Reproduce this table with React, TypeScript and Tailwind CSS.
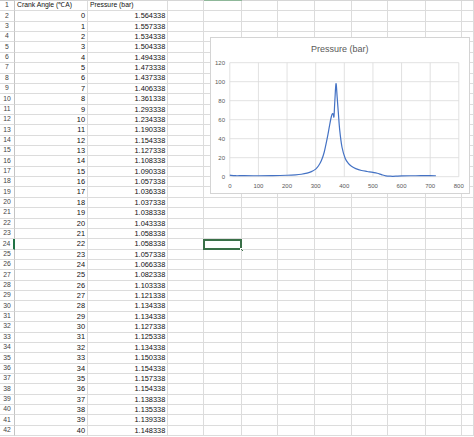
import React from "react";

const data: [number, string][] = [
  [0, "1.564338"], [1, "1.557338"], [2, "1.534338"], [3, "1.504338"], [4, "1.494338"],
  [5, "1.473338"], [6, "1.437338"], [7, "1.406338"], [8, "1.361338"], [9, "1.293338"],
  [10, "1.234338"], [11, "1.190338"], [12, "1.154338"], [13, "1.127338"], [14, "1.108338"],
  [15, "1.090338"], [16, "1.057338"], [17, "1.036338"], [18, "1.037338"], [19, "1.038338"],
  [20, "1.043338"], [21, "1.058338"], [22, "1.058338"], [23, "1.057338"], [24, "1.066338"],
  [25, "1.082338"], [26, "1.103338"], [27, "1.121338"], [28, "1.134338"], [29, "1.134338"],
  [30, "1.127338"], [31, "1.125338"], [32, "1.134338"], [33, "1.150338"], [34, "1.154338"],
  [35, "1.157338"], [36, "1.154338"], [37, "1.138338"], [38, "1.135338"], [39, "1.139338"],
  [40, "1.148338"],
];

const restCols = ["w-[36px]", "w-[37.4px]", "w-[36.3px]", "w-[37.3px]", "w-[36.7px]", "w-[36.3px]", "w-[37.4px]", "w-[36px]", "w-[12.3px]"];

const curvePts: [number, number][] = [
  [0, 1.56], [20, 1.04], [50, 1.1], [100, 1.0], [150, 1.1], [200, 1.5], [230, 2], [250, 2.6],
  [270, 3.8], [285, 5.3], [300, 8], [310, 11.5], [320, 17], [330, 26], [340, 40], [348, 53],
  [353, 61], [357, 65.5], [360, 66.5], [362, 65], [364, 63.5], [367, 80], [371, 98], [375, 84],
  [379, 68], [384, 49], [392, 31], [403, 19.5], [414, 14], [425, 11], [440, 8.5], [460, 6.5],
  [480, 5.5], [500, 4.5], [515, 3.6], [530, 2.2], [545, 0.9], [560, 0.5], [580, 0.5], [600, 0.9],
  [650, 1.0], [700, 1.1], [720, 1.0],
];

const X = (a: number) => 19.8 + a * 0.28625;
const Y = (v: number) => 139.7 - v * 0.95;

function buildPath(): string {
  const p = curvePts.map(([a, v]) => [X(a), Y(v)]);
  let d = `M${p[0][0].toFixed(2)},${p[0][1].toFixed(2)}`;
  for (let i = 0; i < p.length - 1; i++) {
    const p0 = p[i - 1] || p[i];
    const p1 = p[i];
    const p2 = p[i + 1];
    const p3 = p[i + 2] || p2;
    const c1x = p1[0] + (p2[0] - p0[0]) / 6;
    const c1y = p1[1] + (p2[1] - p0[1]) / 6;
    const c2x = p2[0] - (p3[0] - p1[0]) / 6;
    const c2y = p2[1] - (p3[1] - p1[1]) / 6;
    d += ` C${c1x.toFixed(2)},${c1y.toFixed(2)} ${c2x.toFixed(2)},${c2y.toFixed(2)} ${p2[0].toFixed(2)},${p2[1].toFixed(2)}`;
  }
  return d;
}

function Chart() {
  const xs = [0, 100, 200, 300, 400, 500, 600, 700, 800];
  const ys = [0, 20, 40, 60, 80, 100, 120];
  return (
    <div className="absolute left-[209.5px] top-[37px] w-[260.5px] h-[157px] bg-white border border-[#d4d4d4]">
      <div className="pt-[6px] text-center text-[9px] leading-[10px] text-[#595959] font-['Liberation_Sans',Arial,sans-serif]">
        Pressure (bar)
      </div>
      <svg className="absolute left-[-1px] top-[-1px]" width="260.5" height="157" viewBox="0 0 260.5 157">
        {xs.map((a) => (
          <line key={"v" + a} x1={X(a)} x2={X(a)} y1={Y(120)} y2={Y(0)} stroke="#d9d9d9" strokeWidth="0.8" />
        ))}
        {ys.map((v) => (
          <line key={"h" + v} x1={X(0)} x2={X(800)} y1={Y(v)} y2={Y(v)} stroke="#d9d9d9" strokeWidth="0.8" />
        ))}
        {ys.map((v) => (
          <text key={"yl" + v} x={15} y={Y(v) + 2.1} textAnchor="end" fontSize="6" fill="#595959" fontFamily="'Liberation Sans', Arial, sans-serif">
            {v}
          </text>
        ))}
        {xs.map((a) => (
          <text key={"xl" + a} x={X(a)} y={150.8} textAnchor="middle" fontSize="6" fill="#595959" fontFamily="'Liberation Sans', Arial, sans-serif">
            {a}
          </text>
        ))}
        <path d={buildPath()} fill="none" stroke="#4472c4" strokeWidth="1.2" strokeLinejoin="round" />
      </svg>
    </div>
  );
}

function Row({ n, a, b }: { n: number; a: string; b: string }) {
  const selected = n === 24;
  const isHeader = n === 1;
  return (
    <div className="flex h-[10.36px]">
      <div
        className={
          "w-[15px] shrink-0 flex items-center justify-center border-b border-[#dcdcdc] text-[6.8px] text-[#444] relative " +
          (selected ? "border-r-2 border-r-[#217346]" : "border-r border-r-[#c4c4c4]")
        }
      >
        {n}
      </div>
      <div
        className={
          "w-[73px] shrink-0 flex items-center border-r border-b border-[#dcdcdc] text-[#111] px-[2px] " +
          (isHeader ? "justify-start text-[6.8px]" : "justify-end text-[7.4px]")
        }
      >
        {a}
      </div>
      <div
        className={
          "w-[80.3px] shrink-0 flex items-center border-r border-b border-[#dcdcdc] text-[#111] px-[2px] " +
          (isHeader ? "justify-start text-[6.8px]" : "justify-end text-[7.4px]")
        }
      >
        {b}
      </div>
      {restCols.map((w, i) => (
        <div key={i} className={w + " shrink-0 border-r border-b border-[#dcdcdc] relative"}>
          {selected && i === 1 && (
            <>
              <div className="absolute left-[-1px] top-[-0.5px] right-[-1px] bottom-[-1.5px] border-2 border-[#3a7048]" />
              <div className="absolute right-[-3px] bottom-[-3.5px] w-[4px] h-[4px] bg-[#3a7048] border border-white" />
            </>
          )}
        </div>
      ))}
    </div>
  );
}

export default function App() {
  const rows: { n: number; a: string; b: string }[] = [
    { n: 1, a: "Crank Angle (℃A)", b: "Pressure (bar)" },
    ...data.map(([ang, p], i) => ({ n: i + 2, a: String(ang), b: p })),
  ];
  return (
    <div className="relative w-[474px] h-[437px] overflow-hidden bg-white font-['Liberation_Sans',Arial,sans-serif] leading-none">
      <div className="flex h-[1px]">
        <div className="w-[15px] shrink-0 bg-[#c8c8c8]" />
        <div className="w-[189.3px] shrink-0 bg-[#d6d6d6]" />
        <div className="w-[37.4px] shrink-0 bg-[#8fb89a]" />
        <div className="flex-1 bg-[#d6d6d6]" />
      </div>
      {rows.map((r) => (
        <Row key={r.n} n={r.n} a={r.a} b={r.b} />
      ))}
      <Chart />
    </div>
  );
}
